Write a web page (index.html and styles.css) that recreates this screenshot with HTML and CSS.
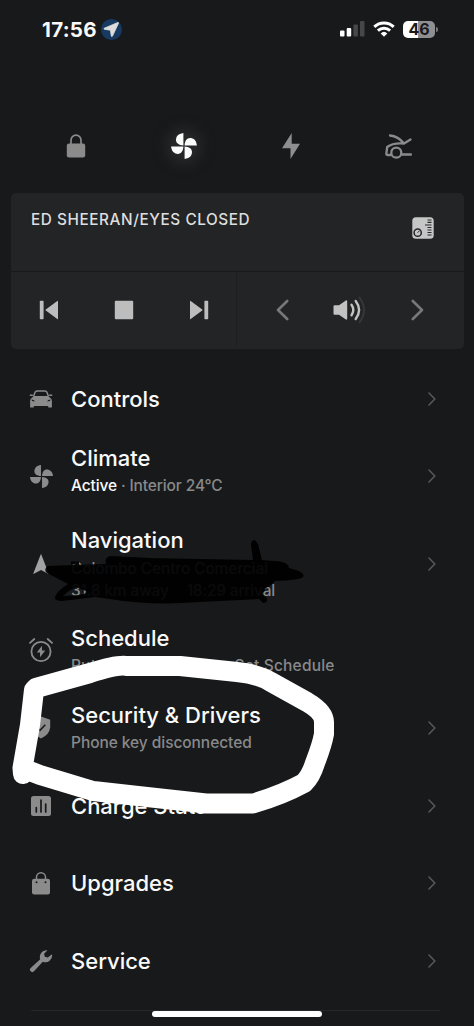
FILE: index.html
```html
<!DOCTYPE html>
<html lang="en">
<head>
<meta charset="utf-8">
<title>Vehicle</title>
<link rel="stylesheet" href="styles.css">
</head>
<body>
<svg class="defs" width="0" height="0">
  <symbol id="fan" viewBox="0 0 26 26">
    <path d="M12.400 12.400V0C7.500.3 5 3.600 5 7c0 3.200 3 5.200 7.400 5.400zM13.600 12.400H26C25.700 7.500 22.400 5 19 5c-3.200 0-5.200 3-5.400 7.400zM13.600 13.600V26c4.900-.3 7.400-3.600 7.400-7 0-3.200-3-5.200-7.400-5.400zM12.400 13.600H0C.3 18.500 3.600 21 7 21c3.200 0 5.200-3 5.400-7.400z"/>
  </symbol>
  <symbol id="chev" viewBox="0 0 8 14">
    <path d="M1 1l5.800 6L1 13" fill="none" stroke="#58595b" stroke-width="1.500" stroke-linecap="round"/>
  </symbol>
</svg>
<div class="phone">
  <header class="status">
    <div class="clock">
      <span class="time">17:56</span>
      <svg class="loc" width="21" height="21" viewBox="0 0 21 21"><circle cx="10.500" cy="10.500" r="10.500" fill="#173a62"/><path d="M16.800 3.500L3.300 9.200c-.6.300-.5 1 .1 1.100l6 .9.900 5.800c.1.700.9.800 1.200.1L17.500 4.200c.2-.5-.2-.9-.7-.7z" fill="#dededc" stroke="#dededc" stroke-width=".8"/></svg>
    </div>
    <div class="signals">
      <svg width="25" height="16" viewBox="0 0 25 16"><rect x="0" y="9.500" width="4.500" height="6" rx="1" fill="#fff"/><rect x="6.700" y="7" width="4.500" height="8.500" rx="1" fill="#fff"/><rect x="13.400" y="3.500" width="4.500" height="12" rx="1" fill="#464749"/><rect x="20" y="0" width="4.500" height="15.500" rx="1" fill="#464749"/></svg>
      <svg width="22" height="16" viewBox="0 0 22 16"><g fill="none" stroke="#fff" stroke-width="3"><path d="M1.300 5.900a14 14 0 0 1 19.400 0"/><path d="M4.900 9.700a8.900 8.900 0 0 1 12.200 0"/></g><path d="M11 15.800l-3.300-3.400a4.800 4.800 0 0 1 6.600 0z" fill="#fff"/></svg>
      <div class="battery"><span>46</span></div>
    </div>
  </header>

  <nav class="quick">
    <svg width="20" height="24" viewBox="0 0 20 24"><path d="M5 10V6.200a5 5 0 0 1 10 0V10" fill="none" stroke="#8b8b8c" stroke-width="1.700"/><rect x=".8" y="9.500" width="18.400" height="14" rx="2.200" fill="#8b8b8c"/></svg>
    <svg class="lit" width="26" height="26" fill="#fafafa"><use href="#fan"/></svg>
    <svg width="18" height="26" viewBox="0 0 18 26"><path d="M9.700 0v10.800H18L8.500 26V15.200H0z" fill="#8e8e90"/></svg>
    <svg width="27" height="25" viewBox="0 0 27 25"><g fill="none" stroke="#8b8b8c" stroke-width="2.300" stroke-linecap="round" stroke-linejoin="round"><path d="M5 1.500c5.500.5 10 3 14 8l6.500-4M19 9.500C12.500 9 6 10 2.200 13L1.300 20q0 1 1 1H5.500M17 20.500h9"/><circle cx="11.300" cy="18.700" r="5"/></g></svg>
  </nav>

  <section class="media">
    <div class="track">
      <span class="song">ED SHEERAN/EYES CLOSED</span>
      <svg width="22" height="22" viewBox="0 0 22 22"><rect x=".3" y=".3" width="21.400" height="21.400" rx="3.500" fill="#c6c6c6"/><circle cx="5.700" cy="15.700" r="3.600" fill="none" stroke="#252628" stroke-width="1.500"/><path d="M5.700 15.700l1.800-2" stroke="#252628"/><path d="M15.500 3h4M15.500 5.300h4M13 8h6.500M15.500 10.500h4M15.500 13h4M15.500 15.500h4M15.500 18h4" stroke="#252628" stroke-width="1.200"/></svg>
    </div>
    <div class="controls">
      <div class="play">
        <svg width="20" height="20" viewBox="0 0 20 20" fill="#bdbdbd"><rect x=".8" y=".8" width="3.800" height="18.400" rx=".8"/><path d="M19 1.300v17.400q0 .8-.7.300L6.800 10.600q-.7-.6 0-1.200L18.300 1q.7-.5.700.3z"/></svg>
        <svg width="20" height="20" viewBox="0 0 20 20" fill="#bdbdbd"><rect x=".8" y=".8" width="18.400" height="18.400" rx="1"/></svg>
        <svg width="20" height="20" viewBox="0 0 20 20" fill="#bdbdbd"><rect x="15.400" y=".8" width="3.800" height="18.400" rx=".8"/><path d="M1 1.300v17.400q0 .8.700.3l11.500-8.400q.7-.6 0-1.200L1.700 1Q1 .5 1 1.300z"/></svg>
      </div>
      <div class="volume">
        <svg width="14" height="22" viewBox="0 0 14 22"><path d="M12.200 2L3 11l9.200 9" fill="none" stroke="#77787a" stroke-width="2.600" stroke-linecap="round" stroke-linejoin="round"/></svg>
        <svg width="34" height="28" viewBox="0 0 34 28"><path d="M1.500 9.300H6L12.500 4.700q1.700-1 1.700.8v17q0 1.800-1.700.8L6 18.700H1.500q-1 0-1-1v-7.400q0-1 1-1z" fill="#c2c2c2"/><g fill="none" stroke-linecap="round"><path d="M18.500 8.800q3.600 5.200 0 10.400M22.700 5q6.800 9 0 18" stroke="#c2c2c2" stroke-width="2.400"/><path d="M26.500 1.500q9 12.500 0 25" stroke="#36373a" stroke-width="2"/></g></svg>
        <svg width="14" height="22" viewBox="0 0 14 22"><path d="M1.800 2L11 11l-9.200 9" fill="none" stroke="#77787a" stroke-width="2.600" stroke-linecap="round" stroke-linejoin="round"/></svg>
      </div>
    </div>
  </section>

  <main class="menu">
    <div class="row r-controls">
      <svg class="icon" width="24" height="18" viewBox="0 0 24 18"><path d="M4.500 6.500L6.200 2Q6.600.9 8 .9h8q1.400 0 1.800 1.100l1.700 4.500" fill="none" stroke="#8b8b8c" stroke-width="1.500"/><path d="M5 6h14l3 2.500q.9 1 .9 2.500v6q0 .6-.6.600h-2.500q-.6 0-.6-.6V16H4.800v1q0 .6-.6.600H1.700q-.6 0-.6-.6v-6q0-1.500.9-2.500z" fill="#8b8b8c"/><path d="M.8 5.200h3M20.200 5.200h3" stroke="#8b8b8c" stroke-width="1.400"/><path d="M2.500 9.500q2.500 0 3.500 2l-3-.6zM21.500 9.500q-2.500 0-3.500 2l3-.6z" fill="#18191b"/></svg>
      <div class="text"><h2>Controls</h2></div>
      <svg class="chev" width="8" height="14"><use href="#chev"/></svg>
    </div>
    <div class="row r-climate">
      <svg class="icon" width="23" height="23" fill="#8b8b8c"><use href="#fan"/></svg>
      <div class="text"><h2>Climate</h2><p class="s-climate"><b>Active</b> · Interior 24°C</p></div>
      <svg class="chev" width="8" height="14"><use href="#chev"/></svg>
    </div>
    <div class="row r-nav">
      <svg class="icon" width="18" height="22" viewBox="0 0 18 22"><path d="M9 .8l7.600 19.500q.3.900-.5.500L9 17l-7.100 3.800q-.8.400-.5-.5z" fill="#a3a3a4"/></svg>
      <div class="text"><h2>Navigation</h2><p class="s-place">Colombo Centro Comercial</p><p class="s-eta"><span>31.8 km away</span><span>18:29 arrival</span></p></div>
      <svg class="chev" width="8" height="14"><use href="#chev"/></svg>
    </div>
    <div class="row r-schedule">
      <svg class="icon" width="24" height="24" viewBox="0 0 24 24"><g fill="none" stroke="#8b8b8c" stroke-width="1.800" stroke-linecap="round"><circle cx="12" cy="13.500" r="9.600"/><path d="M1 4.800L5.300 1M23 4.800L18.700 1"/></g><path d="M13 7.800v4.600h3.200L11 19.200v-4.600H7.800z" fill="#8b8b8c"/></svg>
      <div class="text"><h2>Schedule</h2><p class="s-schedule">Put vehicle in Park to Set Schedule</p></div>
    </div>
    <div class="row r-security">
      <svg class="icon" width="20" height="23" viewBox="0 0 20 23"><path d="M10 .5l9.200 3.200v7.500Q18.500 18.500 10 22.500 1.500 18.500.8 11.200V3.700z" fill="#8b8b8c"/><path d="M6 11.300l3 3 5.300-5.500" fill="none" stroke="#18191b" stroke-width="1.600"/></svg>
      <div class="text"><h2>Security &amp; Drivers</h2><p class="s-security">Phone key disconnected</p></div>
      <svg class="chev" width="8" height="14"><use href="#chev"/></svg>
    </div>
    <div class="row r-charge">
      <svg class="icon" width="20" height="20" viewBox="0 0 20 20"><rect width="20" height="20" rx="2.500" fill="#8b8b8c"/><path d="M5.300 11.500V16M10 4v12M14.700 8v8" stroke="#18191b" stroke-width="1.700" stroke-linecap="round"/></svg>
      <div class="text"><h2>Charge Stats</h2></div>
      <svg class="chev" width="8" height="14"><use href="#chev"/></svg>
    </div>
    <div class="row r-upgrades">
      <svg class="icon" width="18" height="23" viewBox="0 0 18 23"><path d="M4.500 8V5.300a4.500 4.500 0 0 1 9 0V8" fill="none" stroke="#8b8b8c" stroke-width="1.500"/><rect y="6.800" width="18" height="15.700" rx="2.200" fill="#8b8b8c"/><circle cx="4.500" cy="10.300" r="1" fill="#18191b"/><circle cx="13.500" cy="10.300" r="1" fill="#18191b"/></svg>
      <div class="text"><h2>Upgrades</h2></div>
      <svg class="chev" width="8" height="14"><use href="#chev"/></svg>
    </div>
    <div class="row r-service">
      <svg class="icon" width="24" height="24" viewBox="0 0 24 24"><path d="M18.500 1.200a6.800 6.800 0 0 0-7.300 9L1.700 19a2.300 2.300 0 0 0 3.300 3.300l8.800-9.500a6.800 6.800 0 0 0 9.200-7.600L18.800 8.500l-3-.8-.7-2.900z" fill="#8b8b8c"/></svg>
      <div class="text"><h2>Service</h2></div>
      <svg class="chev" width="8" height="14"><use href="#chev"/></svg>
    </div>
  </main>
  <hr class="rule">

  <svg class="markup" width="474" height="1026" viewBox="0 0 474 1026">
    <path fill="#000" fill-opacity=".93" fill-rule="evenodd" d="M48 566L72 565L106 564Q104 557 111 556L150 558L253 560L251 545Q251 540 255 540L258 544L262 560L280 561.500Q289 563 289 568L299 571Q305 574 303 577Q300 580 275 581L271 585L266 588L262 594L267 598Q268 603 263 603L259 599L200 602Q150 606 110 599L95 597L62 601Q54 601 55 597Q57 591 68 584L47 573Q43 569 48 566zM63 596Q69 590 76 587L86 591Q87 594 80 595zM71 561.500h8v3h-8z"/>
    <path class="loop" d="M23 774L22.500 768L30 725L34 690L36 688L90 673Q118 664 127 666H180L237 672Q258 674 271 682L307 702Q324 712 324 722V734Q322 745 315 763Q311 776 304 783Q282 795 253 803.500H206L147 797L93 791L40 775L27 770"/>
  </svg>
  <div class="home"></div>
</div>
</body>
</html>
```
FILE: styles.css
```css
* { box-sizing: border-box; margin: 0; }
body { background: #18191b; font-family: Inter, "Liberation Sans", sans-serif; }
.defs { position: absolute; }
.phone { position: relative; width: 474px; height: 1026px; overflow: hidden; background: #18191b; color: #fafafa; }
svg { display: block; flex: none; }

.status { display: flex; justify-content: space-between; height: 58px; padding: 0 36px 0 42px; align-items: center; }
.clock, .signals { display: flex; align-items: center; }
.clock { gap: 4px; }
.time { width: 55px; font-size: 20.500px; font-weight: 700; white-space: nowrap; letter-spacing: .3px; }
.signals { gap: 8px; }
.signals svg:first-child { margin-right: 0; }
.battery { position: relative; width: 32px; height: 17px; border-radius: 5px; background: linear-gradient(90deg, #fff 46%, #8f8f91 46%); color: #18191b; font-size: 16px; font-weight: 700; line-height: 17px; text-align: center; margin-right: 3px; }
.battery::after { content: ""; position: absolute; right: -3px; top: 6px; width: 2px; height: 5px; border-radius: 0 2px 2px 0; background: #77787a; }

.quick { display: flex; align-items: center; justify-content: space-between; height: 50px; margin-top: 63px; padding: 0 62px 0 66px; }
.lit { border-radius: 50%; box-shadow: 0 0 12px 6px #252628; background: #252628; }

.media { width: 453px; height: 156px; margin: 22px 0 0 11px; border-radius: 5px; background: #232426; }
.track { display: flex; justify-content: space-between; height: 79px; padding: 18px 30px 0 20px; border-bottom: 1px solid #18191b; }
.song { font-size: 15.300px; line-height: 18px; font-weight: 500; letter-spacing: .58px; color: #dedede; white-space: nowrap; }
.track svg { margin-top: 6px; }
.controls { display: flex; height: 76px; }
.play, .volume { display: flex; align-items: center; justify-content: space-between; }
.play { width: 226px; padding: 0 27px 0 28px; border-right: 1px solid #1d1e20; }
.volume { width: 227px; padding: 0 39px 0 38px; }

.menu { padding: 11px 38px 0 28px; }
.row { display: grid; grid-template-columns: 26px 1fr 8px; column-gap: 17px; align-items: center; height: 77px; }
.icon { justify-self: center; }
.text { padding-top: 1px; }
h2 { font-size: 22px; font-weight: 500; line-height: 27px; white-space: nowrap; }
p { font-size: 15.500px; line-height: 22px; font-weight: 500; color: #88898b; white-space: nowrap; }
p b { font-weight: 500; color: #fafafa; }
.s-climate, .s-place { letter-spacing: -.13px; }
.s-eta { display: flex; gap: 18px; letter-spacing: -.2px; }
.s-schedule { letter-spacing: .18px; }
.s-security { letter-spacing: -.06px; }
.r-climate { height: 78px; }
.r-climate .text { padding: 0 0 9px; }
.r-climate p, .r-schedule p, .r-security p { line-height: 27px; }
.r-nav { height: 97px; }
.r-nav h2 { margin-bottom: 4px; }
.r-schedule { height: 76px; }
.r-schedule .text { padding-top: 3px; }
.r-security { height: 79px; }
.r-security .text { padding-top: 3px; }
.r-upgrades { height: 78px; }
.rule { width: 409px; height: 1px; margin: 11px 0 0 31px; border: 0; background: #252628; }

.markup { position: absolute; left: 0; top: 0; }
.loop { fill: none; stroke: #fff; stroke-width: 20px; stroke-linecap: round; stroke-linejoin: round; }
.home { position: absolute; left: 152px; top: 1011px; width: 170px; height: 6px; border-radius: 3px; background: #fff; }
```
